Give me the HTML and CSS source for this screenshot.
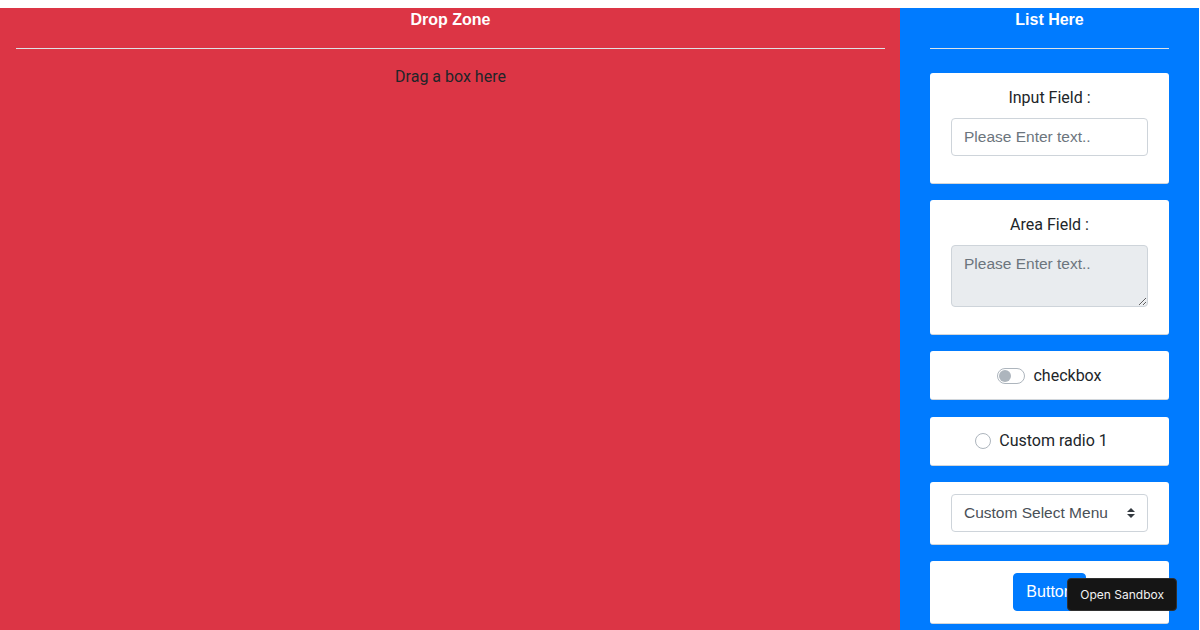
FILE: index.html
```html
<!DOCTYPE html>
<html lang="en">
<head>
<meta charset="utf-8">
<title>Drag and Drop</title>
<link rel="stylesheet" href="styles.css">
</head>
<body>
<div class="row">
  <section class="drop-zone">
    <h5 class="zone-title">Drop Zone</h5>
    <hr class="rule">
    <p class="hint">Drag a box here</p>
  </section>
  <aside class="list-zone">
    <h5 class="zone-title">List Here</h5>
    <hr class="rule">
    <div class="cards">
      <div class="card">
        <label class="field-label" for="inp">Input Field :</label>
        <input id="inp" class="form-control" type="text" placeholder="Please Enter text..">
        <div class="spacer"></div>
      </div>
      <div class="card">
        <label class="field-label" for="area">Area Field :</label>
        <textarea id="area" class="form-control area" rows="2" placeholder="Please Enter text.." readonly></textarea>
        <div class="spacer"></div>
      </div>
      <div class="card card-center">
        <label class="switch">
          <span class="switch-track"><span class="switch-knob"></span></span>
          <span class="control-text">checkbox</span>
        </label>
      </div>
      <div class="card card-center">
        <label class="radio">
          <span class="radio-dot"></span>
          <span class="control-text">Custom radio 1</span>
        </label>
      </div>
      <div class="card">
        <div class="select-wrap">
          <select class="custom-select">
            <option>Custom Select Menu</option>
          </select>
          <svg class="select-arrow" width="8" height="10" viewBox="0 0 4 5"><path fill="#343a40" d="M2 0L0 2h4zm0 5L0 3h4z"/></svg>
        </div>
      </div>
      <div class="card card-center">
        <button class="btn" type="button">Button</button>
      </div>
    </div>
  </aside>
</div>
<div class="sandbox-tip">Open Sandbox</div>
</body>
</html>
```

FILE: styles.css
```css
* { box-sizing: border-box; }

html, body {
  margin: 0;
  padding: 0;
}

body {
  padding-top: 8px;
  font-family: Roboto, "Liberation Sans", Arial, sans-serif;
  font-size: 16px;
  line-height: 24px;
  color: #212529;
  background: #fff;
}

.row {
  display: flex;
  width: 1200px;
  align-items: stretch;
}

.drop-zone {
  width: 900px;
  background: #dc3545;
  padding: 0 15px 0 16px;
  text-align: center;
}

.list-zone {
  width: 299px;
  background: #007bff;
  padding: 0 30px 16px 30px;
  text-align: center;
}

.zone-title {
  margin: 0;
  font-family: "Liberation Sans", Arial, sans-serif;
  font-size: 16px;
  line-height: 24px;
  font-weight: 700;
  color: #fff;
}

.rule {
  margin: 16px 0;
  border: 0;
  border-top: 1px solid #dee2e6;
  height: 0;
}

.hint {
  margin: 0;
  color: #212529;
}

.cards {
  display: flex;
  flex-direction: column;
  gap: 16.2px;
  padding-top: 8px;
}

.card {
  background: #fff;
  border-radius: 3px;
  padding: 12.5px 21px 11.5px;
  border-bottom: 1px solid #d2d6da;
  display: flex;
  flex-direction: column;
}

.card-center {
  align-items: center;
}

.field-label {
  display: block;
  margin-bottom: 8px;
}

.spacer {
  height: 16px;
}

.form-control {
  display: block;
  width: 100%;
  height: 38px;
  padding: 6px 12px;
  font-family: "Liberation Sans", Arial, sans-serif;
  font-size: 15.5px;
  line-height: 24px;
  color: #495057;
  background: #fff;
  border: 1px solid #ced4da;
  border-radius: 4px;
  margin: 0;
}

.form-control::placeholder {
  color: #6c757d;
  opacity: 1;
}

.area {
  height: 62px;
  background: #e9ecef;
  resize: vertical;
}

.switch, .radio {
  display: flex;
  align-items: center;
  height: 24px;
}

.radio {
  margin-right: 16px;
}

.switch-track {
  width: 28px;
  height: 16px;
  border: 1px solid #adb5bd;
  border-radius: 8px;
  background: #fff;
  position: relative;
  margin-right: 8px;
}

.switch-knob {
  position: absolute;
  left: 1px;
  top: 1px;
  width: 12px;
  height: 12px;
  border-radius: 50%;
  background: #adb5bd;
}

.radio-dot {
  width: 16px;
  height: 16px;
  border: 1px solid #adb5bd;
  border-radius: 50%;
  background: #fff;
  margin-right: 8px;
}

.control-text {
  color: #212529;
}

.select-wrap {
  position: relative;
}

.custom-select {
  display: block;
  width: 100%;
  height: 38px;
  padding: 6px 28px 6px 12px;
  font-family: "Liberation Sans", Arial, sans-serif;
  font-size: 15.5px;
  line-height: 24px;
  color: #495057;
  background: #fff;
  border: 1px solid #ced4da;
  border-radius: 4px;
  appearance: none;
  -webkit-appearance: none;
}

.select-arrow {
  position: absolute;
  right: 13px;
  top: 14px;
  pointer-events: none;
}

.btn {
  height: 38px;
  padding: 6px 12px;
  font-family: "Liberation Sans", Arial, sans-serif;
  font-size: 16px;
  line-height: 24px;
  color: #fff;
  background: #007bff;
  border: 1px solid #007bff;
  border-radius: 4px;
}

.sandbox-tip {
  position: fixed;
  right: 23px;
  bottom: 19px;
  height: 33px;
  padding: 0 12px;
  display: flex;
  align-items: center;
  background: #151515;
  border: 1px solid #2f2f2f;
  border-radius: 4px;
  color: #f2f2f2;
  font-family: Inter, "Liberation Sans", sans-serif;
  font-size: 12px;
}
```
